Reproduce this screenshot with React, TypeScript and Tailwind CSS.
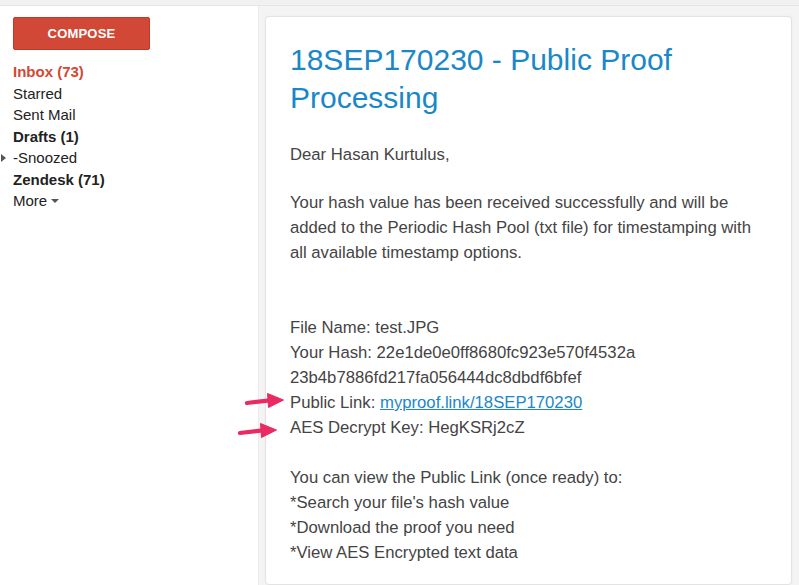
import React from "react";

function Arrow({ className }: { className: string }) {
  return (
    <svg className={className} width="40" height="18" viewBox="0 0 40 18">
      <path d="M2 11 L25 8.4" stroke="#ea2a63" strokeWidth="4.2" strokeLinecap="round" fill="none" />
      <path d="M22.5 1.5 L38.5 8 L23.5 15.5 Z" fill="#ea2a63" strokeLinejoin="round" stroke="#ea2a63" strokeWidth="1" />
    </svg>
  );
}

export default function App() {
  const nav = [
    { t: "Inbox (73)", c: "text-[#d14836] font-bold" },
    { t: "Starred", c: "text-[#222]" },
    { t: "Sent Mail", c: "text-[#222]" },
    { t: "Drafts (1)", c: "text-[#222] font-bold" },
    { t: "-Snoozed", c: "text-[#222]", arrow: true },
    { t: "Zendesk (71)", c: "text-[#222] font-bold" },
  ];
  return (
    <div
      className="w-[799px] h-[585px] overflow-hidden bg-white flex flex-col relative"
      style={{ fontFamily: '"Liberation Sans", Arial, sans-serif' }}
    >
      <div className="h-[6px] bg-[#f1f1f1] border-b border-[#e6e6e6] shrink-0" />
      <div className="flex flex-1 min-h-0">
        <div className="w-[259px] shrink-0 border-r border-[#ececec] pl-[13px] pt-[11px]">
          <div className="w-[137px] h-[33px] bg-[#d14836] rounded-[2px] border border-[#c53727] flex items-center justify-center text-white font-bold text-[13px] tracking-[0.2px]">
            COMPOSE
          </div>
          <div className="mt-[11px] text-[15px] leading-[21.5px]">
            {nav.map((n) => (
              <div key={n.t} className={"relative " + n.c}>
                {n.arrow && (
                  <span className="absolute left-[-12px] top-[7px] w-0 h-0 border-y-[4px] border-y-transparent border-l-[5px] border-l-[#555]" />
                )}
                {n.t}
              </div>
            ))}
            <div className="text-[#222] flex items-center">
              More
              <span className="ml-[4px] mt-[1px] w-0 h-0 border-x-[4px] border-x-transparent border-t-[4px] border-t-[#555]" />
            </div>
          </div>
        </div>
        <div className="flex-1 bg-[#f4f4f4] pt-[10px] pl-[6px] pr-[7px]">
          <div className="h-full bg-white border border-[#e3e3e3] rounded-[4px] shadow-[0_0_2px_rgba(0,0,0,0.06)] pl-[24px] pt-[24px]">
            <h1 className="text-[30px] leading-[38px] text-[#1a87c8] font-normal">
              18SEP170230 - Public Proof
              <br />
              Processing
            </h1>
            <div className="text-[16.7px] leading-[25px] text-[#444]">
              <p className="mt-[25px]">Dear Hasan Kurtulus,</p>
              <p className="mt-[23px]">
                Your hash value has been received successfully and will be
                <br />
                added to the Periodic Hash Pool (txt file) for timestamping with
                <br />
                all available timestamp options.
              </p>
              <p className="mt-[50px]">
                File Name: test.JPG
                <br />
                Your Hash: 22e1de0e0ff8680fc923e570f4532a
                <br />
                23b4b7886fd217fa056444dc8dbdf6bfef
                <br />
                Public Link: <span className="text-[#1a87c8] underline">myproof.link/18SEP170230</span>
                <br />
                AES Decrypt Key: HegKSRj2cZ
              </p>
              <p className="mt-[25px]">
                You can view the Public Link (once ready) to:
                <br />
                *Search your file's hash value
                <br />
                *Download the proof you need
                <br />
                *View AES Encrypted text data
              </p>
            </div>
          </div>
        </div>
      </div>
      <Arrow className="absolute left-[245px] top-[392px]" />
      <Arrow className="absolute left-[238px] top-[422px]" />
    </div>
  );
}
